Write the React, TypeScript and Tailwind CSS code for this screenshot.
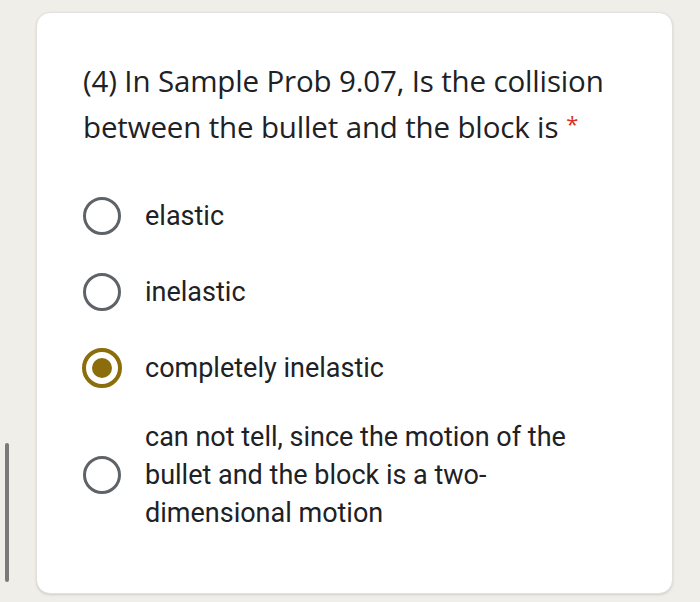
const options = [
  { id: 1, label: "elastic", checked: false },
  { id: 2, label: "inelastic", checked: false },
  { id: 3, label: "completely inelastic", checked: true },
  {
    id: 4,
    label: "can not tell, since the motion of the bullet and the block is a two-dimensional motion",
    checked: false,
  },
];

const Radio = ({ checked }: { checked: boolean }) => {
  if (checked) {
    return (
      <div className="w-[40px] h-[40px] -mx-[1px] shrink-0 rounded-full border-[4px] border-[#8c6d0c] flex items-center justify-center">
        <div className="w-[20px] h-[20px] rounded-full bg-[#8c6d0c]" />
      </div>
    );
  }
  return <div className="w-[38px] h-[38px] shrink-0 rounded-full border-[3px] border-[#5f6368]" />;
};

const App = () => {
  return (
    <div className="w-[700px] h-[602px] bg-[#f0eee9] flex items-start font-['Roboto',sans-serif] overflow-hidden">
      <div className="w-[36px] h-full shrink-0 flex justify-start pl-[5px] pt-[443px]">
        <div className="w-[4px] h-[139px] rounded-full bg-[#7a7a78]" />
      </div>
      <div className="mt-[12px] w-[637px] h-[582px] bg-white rounded-[14px] border border-[#e2e0dc] shadow-sm pl-[46px] pr-[20px] pt-[45px]">
        <h1 className="text-[29.5px] leading-[46px] text-[#202124] font-['Open_Sans',sans-serif] tracking-[-0.15px]">
          (4) In Sample Prob 9.07, Is the collision between the bullet and the block is
          <span className="inline-block ml-[8px] text-[#d93025] text-[22px] leading-none align-[6px]">*</span>
        </h1>
        <div className="mt-[28px] flex flex-col">
          {options.map((o) => (
            <div key={o.id} className={"flex items-center gap-[24px] " + (o.id === 4 ? "mt-[12px]" : "h-[76px]")}>
              <Radio checked={o.checked} />
              <span className="text-[27px] leading-[38px] text-[#202124] w-[440px]">{o.label}</span>
            </div>
          ))}
        </div>
      </div>
    </div>
  );
};

export default App;
